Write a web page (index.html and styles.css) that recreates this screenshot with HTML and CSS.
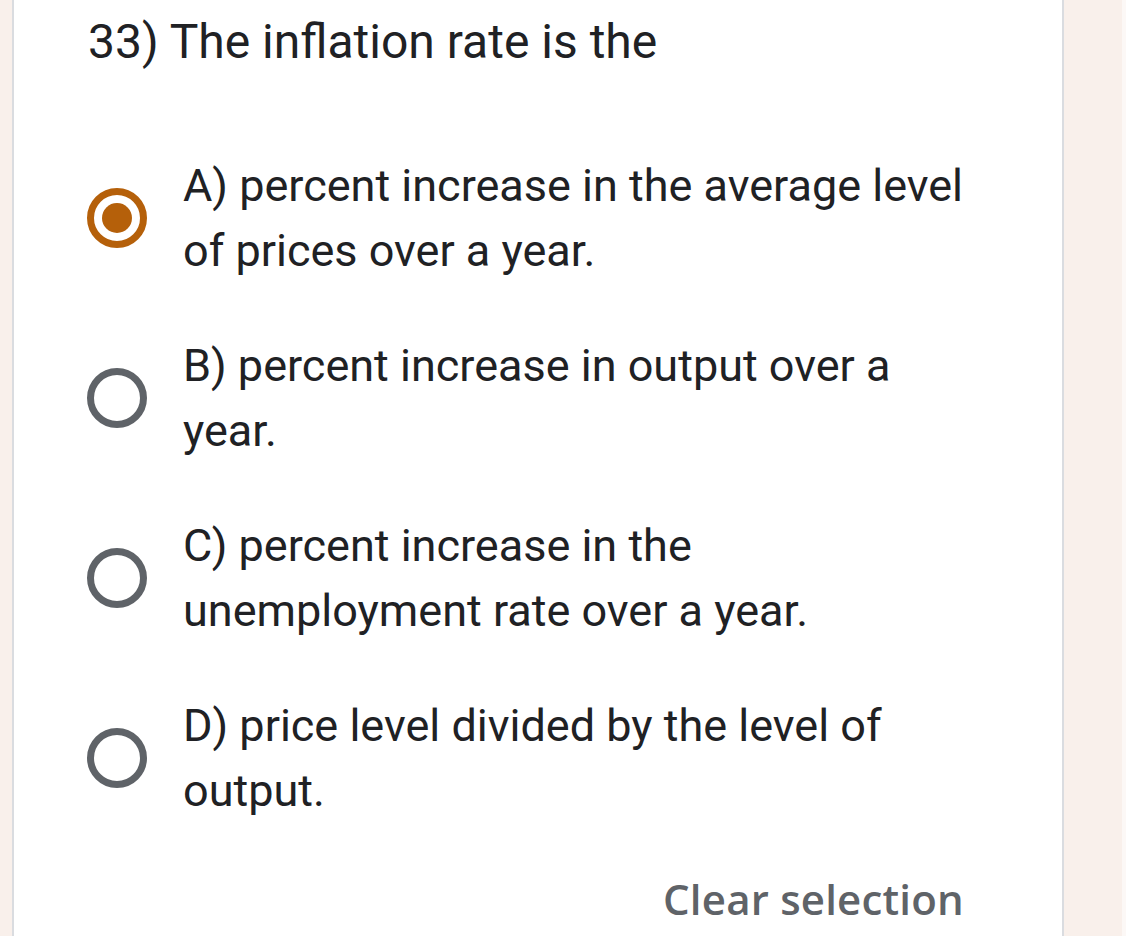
FILE: index.html
```html
<!DOCTYPE html>
<html>
<head>
<meta charset="utf-8">
<link rel="stylesheet" href="styles.css">
</head>
<body>
<div class="page">
  <div class="card">
    <div class="question">33) The inflation rate is the</div>
    <div class="options">
      <div class="option">
        <span class="radio checked"><span class="dot"></span></span>
        <div class="label">A) percent increase in the average level of prices over a year.</div>
      </div>
      <div class="option">
        <span class="radio"></span>
        <div class="label">B) percent increase in output over a year.</div>
      </div>
      <div class="option">
        <span class="radio"></span>
        <div class="label">C) percent increase in the unemployment rate over a year.</div>
      </div>
      <div class="option">
        <span class="radio"></span>
        <div class="label">D) price level divided by the level of output.</div>
      </div>
    </div>
    <div class="actions">
      <span class="clear">Clear selection</span>
    </div>
  </div>
  <div class="gutter"></div>
  <div class="edge"></div>
</div>
</body>
</html>
```
FILE: styles.css
```css
html, body {
  margin: 0;
  padding: 0;
  height: 100%;
  overflow: hidden;
}
body {
  background: #f9f0eb;
  font-family: Roboto, "Liberation Sans", sans-serif;
  color: #202124;
}
.page {
  display: flex;
  height: 936px;
}
.card {
  margin-left: 12px;
  width: 1052px;
  flex: none;
  box-sizing: border-box;
  background: #fff;
  border-left: 2px solid #dadce0;
  border-right: 2px solid #dadce0;
  padding-left: 74px;
}
.gutter {
  width: 58px;
  flex: none;
}
.edge {
  flex: 1;
  background: #fcf8f6;
}
.question {
  font-size: 48px;
  line-height: 60px;
  padding-top: 12px;
}
.options {
  display: flex;
  flex-direction: column;
  gap: 50px;
  margin-top: 81px;
}
.option {
  display: flex;
  align-items: center;
  gap: 36px;
}
.radio {
  width: 60px;
  height: 60px;
  box-sizing: border-box;
  border: 7px solid #5f6368;
  border-radius: 50%;
  flex: none;
  display: flex;
  align-items: center;
  justify-content: center;
  margin-left: -1px;
}
.radio.checked {
  border-color: #b5600a;
}
.dot {
  width: 30px;
  height: 30px;
  border-radius: 50%;
  background: #b5600a;
}
.label {
  font-size: 45px;
  line-height: 65px;
  width: 790px;
}
.actions {
  display: flex;
  justify-content: flex-end;
  padding-right: 98px;
  margin-top: 47px;
}
.clear {
  font-family: "Open Sans", Lato, sans-serif;
  font-weight: 600;
  font-size: 42px;
  letter-spacing: 0.2px;
  color: #5f6368;
}
```
